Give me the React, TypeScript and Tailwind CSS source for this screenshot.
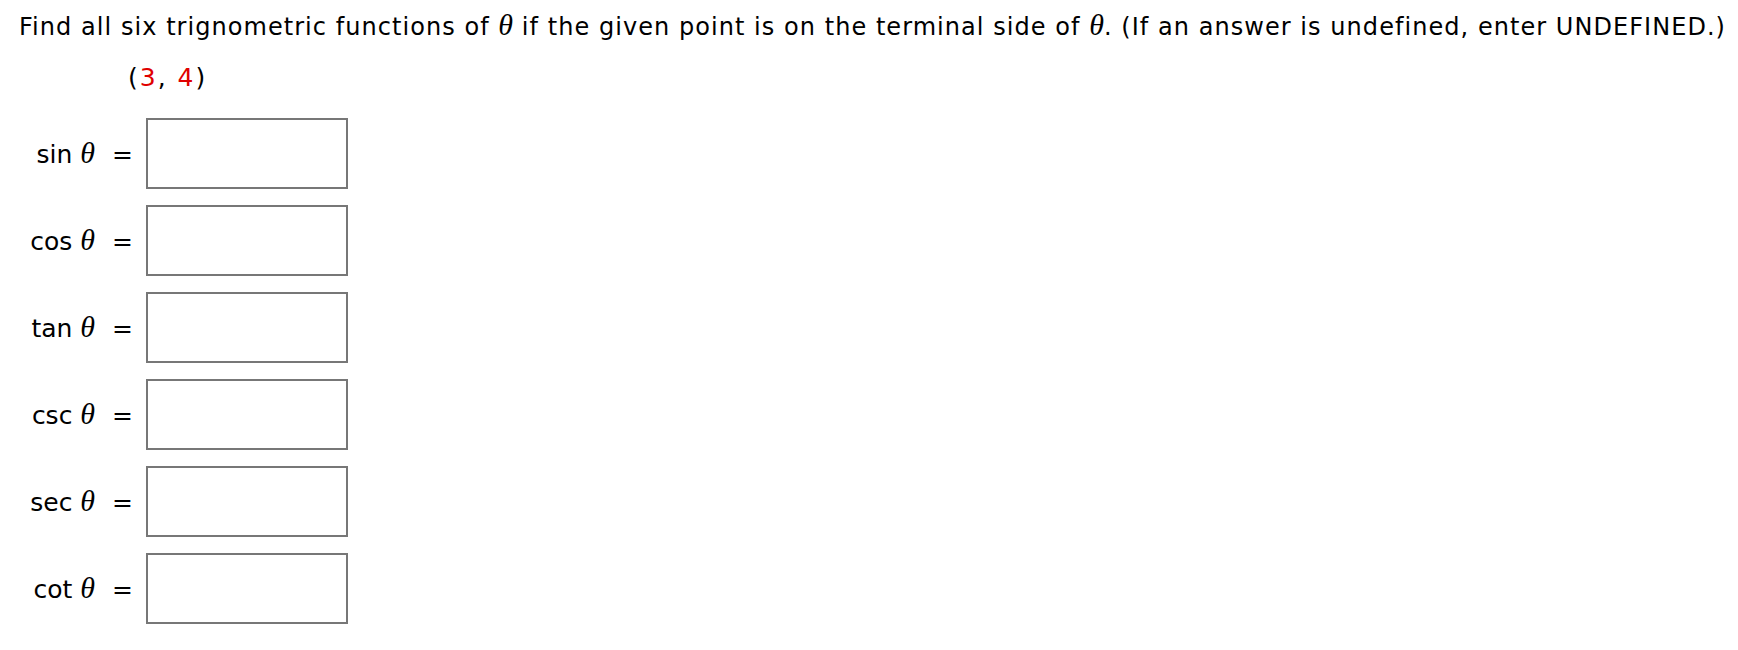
import React from 'react';

const rows = ['sin', 'cos', 'tan', 'csc', 'sec', 'cot'];

const Theta = () => (
  <span className="font-['Liberation_Serif','DejaVu_Serif',serif] italic text-[30px] tracking-normal">θ</span>
);

const App: React.FC = () => {
  return (
    <div className="min-h-[650px] bg-white text-black pl-[19px] pt-[9px] font-['DejaVu_Sans','Verdana',sans-serif]">
      <p className="text-[24px] leading-[32px] tracking-[1.05px] whitespace-nowrap">
        Find all six trignometric functions of <Theta /> if the given point is on the terminal side of <Theta />. (If an answer is undefined, enter UNDEFINED.)
      </p>

      <p className="mt-[19px] ml-[109px] text-[25px] leading-[32px] tracking-[2px]">
        (<span className="text-[#e00000]">3</span>, <span className="text-[#e00000]">4</span>)
      </p>

      <div className="mt-[24px] flex flex-col gap-[16px]">
        {rows.map((fn) => (
          <div key={fn} className="flex items-center">
            <div className="w-[114px] shrink-0 text-right text-[25px] leading-[32px] whitespace-nowrap">
              {fn} <Theta /> <span className="ml-[9px]">=</span>
            </div>
            <input
              type="text"
              className="ml-[13px] w-[202px] h-[71px] border-2 border-[#777] bg-white outline-none px-2 text-[22px]"
            />
          </div>
        ))}
      </div>
    </div>
  );
};

export default App;
